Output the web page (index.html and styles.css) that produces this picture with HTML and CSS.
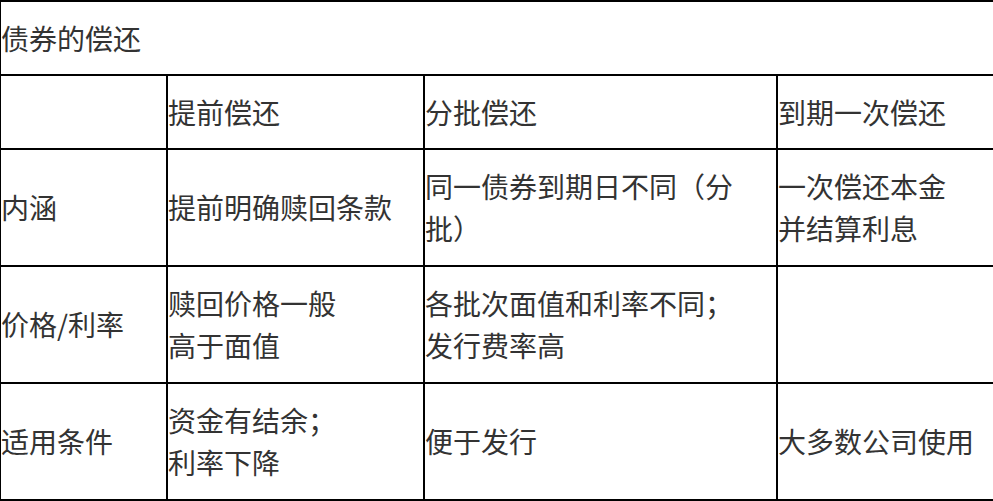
FILE: index.html
```html
<!DOCTYPE html>
<html lang="zh-CN">
<head>
<meta charset="utf-8">
<title>债券的偿还</title>
<link rel="stylesheet" href="styles.css">
</head>
<body>
<table class="bond-table">
  <colgroup>
    <col class="c1">
    <col class="c2">
    <col class="c3">
    <col class="c4">
  </colgroup>
  <tr class="one-line">
    <td colspan="4">债券的偿还</td>
  </tr>
  <tr class="one-line">
    <td></td>
    <td>提前偿还</td>
    <td>分批偿还</td>
    <td>到期一次偿还</td>
  </tr>
  <tr>
    <td>内涵</td>
    <td>提前明确赎回条款</td>
    <td>同一债券到期日不同（分<br>批）</td>
    <td>一次偿还本金<br>并结算利息</td>
  </tr>
  <tr>
    <td>价格/利率</td>
    <td>赎回价格一般<br>高于面值</td>
    <td>各批次面值和利率不同；<br>发行费率高</td>
    <td></td>
  </tr>
  <tr>
    <td>适用条件</td>
    <td>资金有结余；<br>利率下降</td>
    <td>便于发行</td>
    <td>大多数公司使用</td>
  </tr>
</table>
</body>
</html>
```

FILE: styles.css
```css
html, body {
  margin: 0;
  padding: 0;
  background: #fff;
}

body {
  overflow: hidden;
  font-family: "Noto Sans CJK SC", "Noto Sans", sans-serif;
  color: #333;
}

.bond-table {
  border-collapse: collapse;
  table-layout: fixed;
  width: 995px;
  margin-left: -1px;
  margin-top: 0;
}

.c1 { width: 167px; }
.c2 { width: 257px; }
.c3 { width: 353px; }
.c4 { width: 218px; }

.bond-table td {
  border: 2px solid #000;
  padding: 15px 2px 16px 0;
  font-size: 28px;
  line-height: 42px;
  vertical-align: middle;
  text-align: left;
  white-space: nowrap;
  overflow: hidden;
}

.bond-table tr.one-line td {
  padding-top: 15px;
  padding-bottom: 15px;
}
```
